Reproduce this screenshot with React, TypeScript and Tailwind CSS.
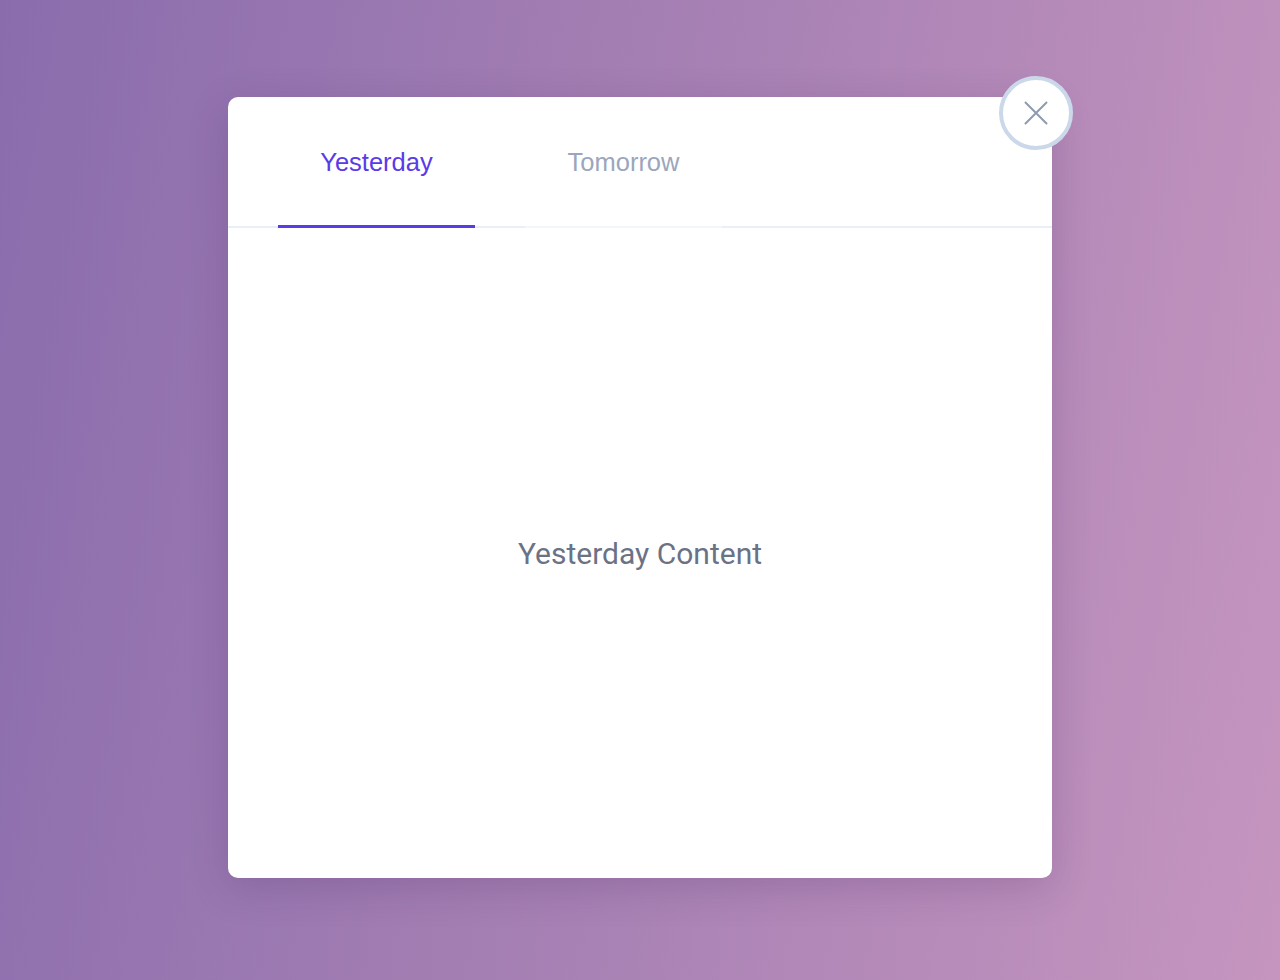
import { useState } from "react";

const tabs = ["Yesterday", "Tomorrow"];

export default function App() {
  const [active, setActive] = useState(0);

  return (
    <div className="min-h-[980px] w-full bg-[linear-gradient(100deg,#8a6cad_0%,#a47fb3_45%,#c595bf_100%)] flex justify-center pt-[97px]">
      <div className="relative w-[824px] h-[781px] bg-white rounded-[10px] rounded-tr-none shadow-[0_10px_40px_rgba(60,30,90,0.2)] flex flex-col">
        {/* Tab bar */}
        <div className="h-[131px] flex gap-[50px] pl-[50px] border-b-2 border-[#e9eff8]">
          {tabs.map((t, i) => (
            <button
              key={t}
              onClick={() => setActive(i)}
              className={
                i === active
                  ? "w-[197px] -mb-[2px] border-b-[3px] border-[#5a3be8] text-[#5a3be8] text-[25.5px] font-['Liberation_Sans',Arial,sans-serif] pt-[2px]"
                  : "w-[197px] -mb-[2px] border-b-2 border-[#f1f5fc] text-[#9ba6bc] text-[25.5px] font-['Liberation_Sans',Arial,sans-serif] pt-[2px]"
              }
            >
              {t}
            </button>
          ))}
        </div>

        {/* Content */}
        <div className="flex-1 flex items-center justify-center">
          <p className="text-[30px] text-[#6b7286] font-['Roboto',sans-serif]">
            {tabs[active]} Content
          </p>
        </div>

        {/* Close button */}
        <button className="absolute -top-[21px] -right-[21px] w-[74px] h-[74px] rounded-full bg-white border-4 border-[#cbd8ea] flex items-center justify-center">
          <svg width="24" height="24" viewBox="0 0 24 24" fill="none">
            <path d="M1.5 1.5L22.5 22.5M22.5 1.5L1.5 22.5" stroke="#8e9ab0" strokeWidth="2" strokeLinecap="round" />
          </svg>
        </button>
      </div>
    </div>
  );
}
